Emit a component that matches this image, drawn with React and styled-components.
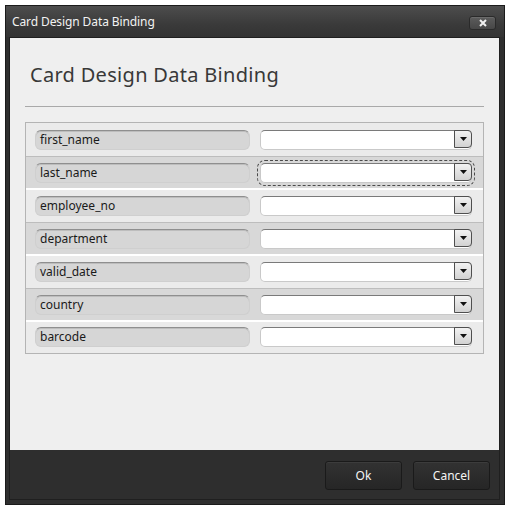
import React from 'react';
import styled, { createGlobalStyle } from 'styled-components';

const GlobalStyle = createGlobalStyle`
  html, body {
    margin: 0;
    padding: 0;
    background: #ffffff;
  }
  body {
    font-family: "Segoe UI", "Noto Sans", "Open Sans", sans-serif;
  }
`;

const Page = styled.div`
  padding: 5px;
`;

const Window = styled.div`
  width: 500px;
  height: 500px;
  box-sizing: border-box;
  background: #2f2f2f;
  border: 1px solid #1b1b1b;
  display: flex;
  flex-direction: column;
  padding: 0 4px 4px 3px;
`;

const TitleBar = styled.div`
  height: 31px;
  margin: 0 -4px 0 -3px;
  padding: 0 8px 0 6px;
  background: linear-gradient(#4d4d4d, #3a3a3a 60%, #333333);
  display: flex;
  align-items: center;
  justify-content: space-between;
  flex-shrink: 0;
`;

const TitleText = styled.span`
  color: #f2f2f2;
  font-size: 12px;
  letter-spacing: -0.1px;
`;

const CloseButton = styled.div`
  width: 25px;
  height: 12px;
  border: 1px solid #2a2a2a;
  border-radius: 3px;
  background: linear-gradient(#5c5c5c, #474747);
  box-shadow: inset 0 1px 0 #6a6a6a;
  display: flex;
  align-items: center;
  justify-content: center;
  margin-top: 3px;
`;

const Content = styled.div`
  flex: 1;
  background: #efefef;
  border: 1px solid #1f1f1f;
  border-bottom: none;
  padding: 0 15px;
`;

const Heading = styled.h1`
  margin: 0;
  padding: 23px 0 0 5px;
  font-size: 20px;
  font-weight: 400;
  color: #383838;
  line-height: 28px;
  letter-spacing: 0.3px;
`;

const Divider = styled.div`
  height: 1px;
  background: #a9a9a9;
  margin: 17px 0 15px 0;
`;

const Table = styled.div`
  border: 1px solid #b4b4b4;
  display: flex;
  flex-direction: column;
`;

const Row = styled.div`
  height: ${({ $last }) => ($last ? 30 : 31)}px;
  display: flex;
  align-items: center;
  gap: 10px;
  padding: 0 11px 0 9px;
  background: ${({ $alt }) => ($alt ? '#d8d8d8' : '#ebebeb')};
  border-top: 1px solid ${({ $alt, $first }) => ($first ? '#ebebeb' : $alt ? '#bdbdbd' : '#ffffff')};
  border-bottom: 1px solid ${({ $alt, $last }) => ($last ? '#ebebeb' : $alt ? '#ffffff' : '#ebebeb')};
`;

const FieldLabel = styled.div`
  width: 215px;
  height: 20px;
  box-sizing: border-box;
  border-radius: 6px;
  background: #d6d6d6;
  border: 1px solid #cfcfcf;
  border-top-color: #8f8f8f;
  box-shadow: inset 0 1px 0 #bdbdbd;
  font-size: 12px;
  color: #1a1a1a;
  padding: 0 4px;
  line-height: 18px;
`;

const Combo = styled.div`
  width: 213px;
  height: 20px;
  box-sizing: border-box;
  background: #ffffff;
  border: 1px solid #c9c9c9;
  border-top-color: #7a7a7a;
  border-radius: 5px;
  display: flex;
  justify-content: flex-end;
  outline: ${({ $focused }) => ($focused ? '1px dashed #4a4a4a' : 'none')};
  outline-offset: 2px;
`;

const DropButton = styled.div`
  width: 18px;
  height: 18px;
  box-sizing: border-box;
  margin: -1px -1px 0 0;
  border: 1px solid #4f4f4f;
  border-radius: 0 4px 4px 0;
  background: linear-gradient(#f2f2f2, #d2d2d2);
  display: flex;
  align-items: center;
  justify-content: center;
`;

const Footer = styled.div`
  height: 50px;
  flex-shrink: 0;
  background: #2e2e2e;
  border: 1px solid #1f1f1f;
  border-top: none;
  display: flex;
  justify-content: flex-end;
  align-items: flex-start;
  gap: 11px;
  padding: 11px 9px 0 0;
  box-sizing: border-box;
`;

const DialogButton = styled.button`
  width: 77px;
  height: 29px;
  border: 1px solid #1a1a1a;
  border-radius: 3px;
  background: linear-gradient(#323232, #262626);
  box-shadow: inset 0 1px 0 #3c3c3c;
  color: #f4f4f4;
  font-family: inherit;
  font-size: 12px;
  padding: 0;
`;

const fields = [
  'first_name',
  'last_name',
  'employee_no',
  'department',
  'valid_date',
  'country',
  'barcode',
];

const Caret = () => (
  <svg width="7" height="4" viewBox="0 0 7 4">
    <path d="M0 0h7L3.5 4z" fill="#111" />
  </svg>
);

const CloseIcon = () => (
  <svg width="8" height="8" viewBox="0 0 8 8">
    <path d="M1 1l6 6M7 1L1 7" stroke="#f0f0f0" strokeWidth="2" />
  </svg>
);

export default function App() {
  return (
    <Page>
      <GlobalStyle />
      <Window>
        <TitleBar>
          <TitleText>Card Design Data Binding</TitleText>
          <CloseButton>
            <CloseIcon />
          </CloseButton>
        </TitleBar>
        <Content>
          <Heading>Card Design Data Binding</Heading>
          <Divider />
          <Table>
            {fields.map((name, i) => (
              <Row
                key={name}
                $alt={i % 2 === 1}
                $first={i === 0}
                $last={i === fields.length - 1}
              >
                <FieldLabel>{name}</FieldLabel>
                <Combo $focused={i === 1}>
                  <DropButton>
                    <Caret />
                  </DropButton>
                </Combo>
              </Row>
            ))}
          </Table>
        </Content>
        <Footer>
          <DialogButton>Ok</DialogButton>
          <DialogButton>Cancel</DialogButton>
        </Footer>
      </Window>
    </Page>
  );
}
